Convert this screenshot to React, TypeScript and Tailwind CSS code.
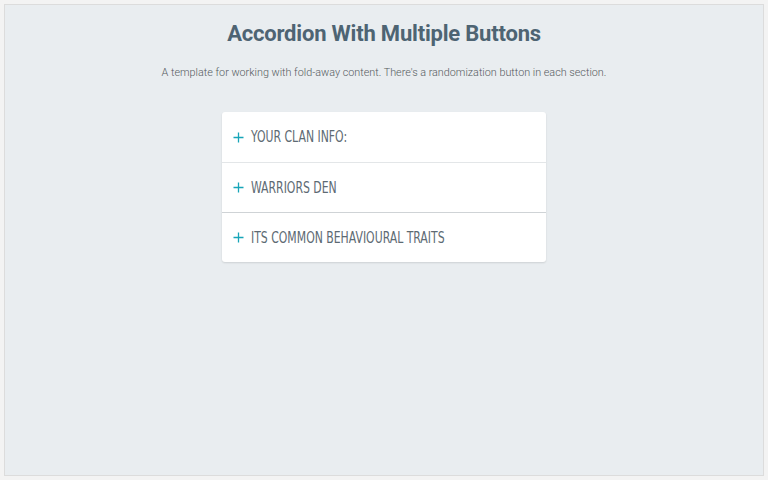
const items = ['Your Clan Info:', 'Warriors Den', 'Its Common Behavioural Traits']

function PlusIcon() {
  return (
    <svg width="11" height="11" viewBox="0 0 11 11" className="shrink-0 text-[#17a5b8]">
      <path d="M5.5 0.5v10M0.5 5.5h10" stroke="currentColor" strokeWidth="1.3" fill="none" />
    </svg>
  )
}

export default function App() {
  return (
    <div className="h-[480px] w-[768px] bg-[#f3f3f3] p-1">
      <div className="flex h-full flex-col items-center border border-[#dcdcdc] bg-[#e9edf0] font-['Roboto',sans-serif]">
        <h1 className="mt-[12px] text-[22px] leading-[34px] font-bold tracking-[-0.2px] text-[#4e6473]">Accordion With Multiple Buttons</h1>
        <p className="mt-[15px] text-[10.8px] leading-[14px] font-light text-[#555b60]">
          A template for working with fold-away content. There's a randomization button in each section.
        </p>
        <div className="mt-[32px] w-[324px] overflow-hidden rounded-[3px] bg-white shadow-[0_1px_2px_rgba(0,0,0,0.12)]">
          {items.map((label, i) => (
            <button
              key={label}
              className={`flex h-[50px] w-full items-center gap-[7px] px-[11px] text-left ${i > 0 ? (i === 2 ? 'border-t border-[#cfd3d6]' : 'border-t border-[#e3e6e8]') : ''}`}
            >
              <PlusIcon />
              <span className="mt-[2px] inline-block origin-left scale-x-[0.78] whitespace-nowrap font-['DejaVu_Sans_Condensed','DejaVu_Sans',sans-serif] text-[15.5px] font-normal uppercase text-[#5d6a73]">
                {label}
              </span>
            </button>
          ))}
        </div>
      </div>
    </div>
  )
}
